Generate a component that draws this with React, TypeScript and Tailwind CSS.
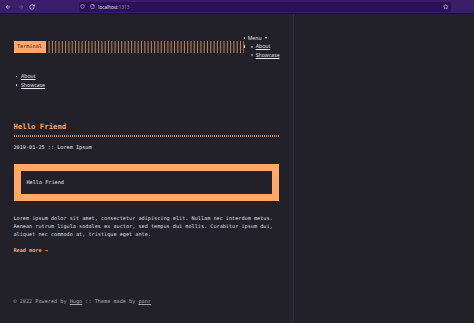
import { ArrowLeft, ArrowRight, RotateCw, Shield, File, Star } from "lucide-react";

const stripes = Array.from({ length: 60 }, (_, i) => i);

export default function App() {
  return (
    <div className="w-[474px] h-[323px] overflow-hidden bg-[#222129] flex flex-col font-['DejaVu_Sans_Mono',monospace]">
      {/* browser toolbar */}
      <div className="h-[13px] bg-[#3b1e69] flex items-center shrink-0">
        <ArrowLeft className="ml-[5px] w-[6px] h-[6px] text-[#e6def2]" strokeWidth={2.5} />
        <ArrowRight className="ml-[6.5px] w-[6px] h-[6px] text-[#7d68a3]" strokeWidth={2.5} />
        <RotateCw className="ml-[5px] w-[6px] h-[6px] text-[#e6def2]" strokeWidth={2.5} />
        <div className="ml-[44px] w-[372px] h-[10px] bg-[#2b1157] rounded-[2px] flex items-center">
          <Shield className="ml-[1.8px] w-[5px] h-[5px] text-[#d9d0ea]" strokeWidth={2.5} />
          <File className="ml-[5px] w-[5px] h-[5px] text-[#d9d0ea]" strokeWidth={2.5} />
          <span className="ml-[3px] text-[4.6px] leading-[6px] font-['Open_Sans',sans-serif] text-[#ece6f5]">
            localhost<span className="text-[#9a8cb6]">:1313</span>
          </span>
          <Star className="ml-auto mr-[2px] w-[5.5px] h-[5.5px] text-[#d9d0ea]" strokeWidth={2.5} />
        </div>
      </div>
      <div className="h-[1px] bg-[#17161d] shrink-0" />

      <div className="flex flex-1">
        <div className="w-[289px] pl-[13.5px] pr-[10px] pt-[20px] shrink-0">
          {/* header */}
          <header className="flex items-center">
            <div className="flex items-center flex-1 h-[12px]">
              <div className="h-[12px] w-[32.5px] bg-[#ffa86a] text-[#222129] text-[5.2px] flex items-center pl-[3.5px] shrink-0">
                Terminal
              </div>
              <div className="flex-1 h-[12px] ml-[1.5px] overflow-hidden">
                <svg width="196" height="12" viewBox="0 0 196 12" className="block">
                  {stripes.map((i) => (
                    <rect key={i} x={0.6 + i * 3.3} y={0} width={1} height={12} fill="#ffa86a" opacity={0.72} />
                  ))}
                </svg>
              </div>
            </div>
            <nav className="w-[37px] shrink-0 text-[5.2px] leading-[8.4px] text-[#e8e8ee] font-['Open_Sans',sans-serif]">
              <div className="flex items-center h-[8.4px]">
                <span className="w-[1.6px] h-[1.6px] rounded-full bg-[#e8e8ee]" />
                <span className="ml-[2.6px]">Menu</span>
                <span className="ml-[3px] text-[4px]">▾</span>
              </div>
              <div className="flex items-center h-[8.4px]">
                <span className="w-[1.4px] h-[2.6px] bg-[#f2f2f2]" />
                <span className="ml-[5.8px] w-[1.8px] h-[1.8px] rounded-full border-[0.5px] border-[#b8b8c2]" />
                <span className="ml-[3px] underline">About</span>
              </div>
              <div className="flex items-center h-[8.4px]">
                <span className="ml-[7.2px] w-[1.8px] h-[1.8px] rounded-full border-[0.5px] border-[#b8b8c2]" />
                <span className="ml-[3px] underline">Showcase</span>
              </div>
            </nav>
          </header>

          {/* side list */}
          <ul className="mt-[13.3px] text-[5.2px] leading-[8.4px] text-[#e8e8ee] font-['Open_Sans',sans-serif]">
            <li className="flex items-center h-[8.4px]">
              <span className="ml-[2.4px] w-[1.6px] h-[1.6px] rounded-full bg-[#e8e8ee]" />
              <span className="ml-[3.5px] underline">About</span>
            </li>
            <li className="flex items-center h-[8.4px]">
              <span className="ml-[2.4px] w-[1.6px] h-[1.6px] rounded-full bg-[#e8e8ee]" />
              <span className="ml-[3.5px] underline">Showcase</span>
            </li>
          </ul>

          {/* post */}
          <h2 className="mt-[32.4px] text-[7.3px] leading-[10px] font-bold text-[#ffa86a]">Hello Friend</h2>
          <div className="mt-[3.3px] h-[2px] opacity-75 bg-[repeating-linear-gradient(90deg,#ffa86a_0px,#ffa86a_1px,transparent_1px,transparent_2px)]" />
          <div className="mt-[6.15px] text-[5.2px] leading-[8.3px] text-[#e6e6ea]">2019-01-25 :: Lorem Ipsum</div>

          <div className="mt-[12.85px] bg-[#ffa86a] p-[7px]">
            <div className="bg-[#222129] h-[22.4px] flex items-center pl-[6px] text-[5.2px] text-[#e6e6ea]">Hello Friend</div>
          </div>

          <p className="mt-[13.45px] text-[5.2px] leading-[8.2px] text-[#dedee3] whitespace-nowrap">
            Lorem ipsum dolor sit amet, consectetur adipiscing elit. Nullam nec interdum metus.
            <br />
            Aenean rutrum ligula sodales ex auctor, sed tempus dui mollis. Curabitur ipsum dui,
            <br />
            aliquet nec commodo at, tristique eget ante.
          </p>

          <div className="mt-[6.85px] text-[5.2px] leading-[8.2px] font-bold text-[#ffa86a]">Read more →</div>

          <footer className="mt-[43.75px] text-[5.2px] leading-[8.3px] text-[#a6a6b0]">
            © 2022 Powered by <span className="underline">Hugo</span> :: Theme made by <span className="underline">panr</span>
          </footer>
        </div>
        <div className="w-[5px] bg-[#25242e] border-r border-[#2f2e39] shrink-0" />
        <div className="flex-1" />
      </div>
    </div>
  );
}
